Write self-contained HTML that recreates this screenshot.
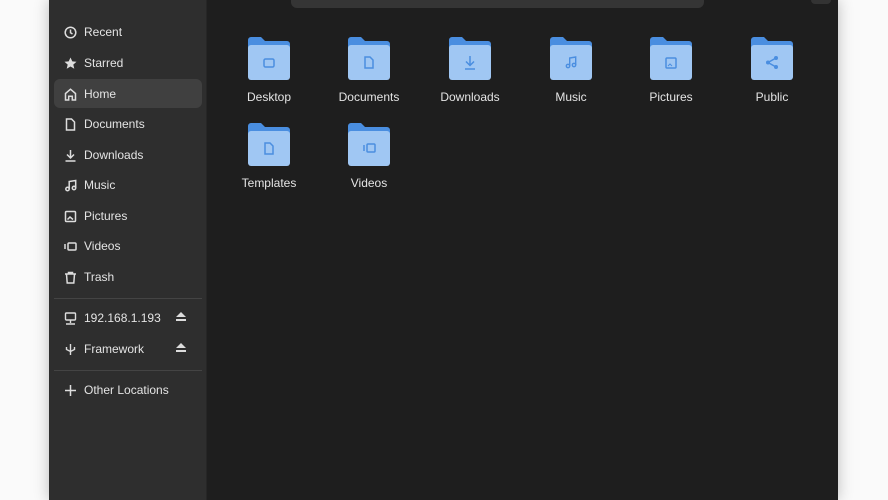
<!DOCTYPE html>
<html><head><style>
body{margin:0;width:888px;height:500px;background:#fafafa;overflow:hidden;font-family:"Liberation Sans",sans-serif;position:relative}
.win{position:absolute;left:49px;top:0;width:789px;height:500px;background:#1e1e1e;box-shadow:0 0 14px rgba(0,0,0,.25)}
.side{position:absolute;left:0;top:0;width:157px;height:500px;background:#2e2e2e;border-right:1px solid #262626}
.it{position:absolute;left:5px;width:148px;height:29px;color:#e4e4e4;font-size:12px;line-height:31px;border-radius:6px}
.it.sel{background:#404040}
.it svg{position:absolute;left:10px;top:9px}
.it span{position:absolute;left:30px}
.sep{position:absolute;left:5px;width:148px;height:1px;background:#444}
.ej{position:absolute;right:16px;top:10px;width:10px;height:9px}
.addr{position:absolute;left:242px;top:0;width:413px;height:8px;background:#353535;border-radius:0 0 6px 6px}
.f{position:absolute;width:100px;text-align:center;color:#e4e4e4;font-size:12px}
.f svg{display:block;margin:0 auto 10px}
</style></head><body>
<div class="win">
<div class="side">
<div class="it" style="top:17px"><svg width="13" height="13" viewBox="0 0 13 13" fill="none" stroke="#ddd" stroke-width="1.5"><circle cx="6.5" cy="6.5" r="5.3"/><path d="M6.5 3.5v3.2l2 1.3"/></svg><span>Recent</span></div>
<div class="it" style="top:48px"><svg width="13" height="13" viewBox="0 0 13 13"><path d="M6.5 .5l1.8 3.9 4.2.4-3.2 2.8 1 4.2-3.8-2.3-3.8 2.3 1-4.2L.5 4.8l4.2-.4z" fill="#ddd"/></svg><span>Starred</span></div>
<div class="it sel" style="top:79px"><svg width="13" height="13" viewBox="0 0 13 13" fill="none" stroke="#ddd" stroke-width="1.5"><path d="M1.5 12V5.5l5-4.3 5 4.3V12H8.3V8.3H4.7V12z"/></svg><span>Home</span></div>
<div class="it" style="top:109px"><svg width="13" height="13" viewBox="0 0 13 13" fill="none" stroke="#ddd" stroke-width="1.5"><path d="M2.5 1h5l3 3v8h-8z"/></svg><span>Documents</span></div>
<div class="it" style="top:140px"><svg width="13" height="13" viewBox="0 0 13 13" fill="none" stroke="#ddd" stroke-width="1.5"><path d="M6.5 1v7.5M3 5.5l3.5 3.5 3.5-3.5M1.5 12h10"/></svg><span>Downloads</span></div>
<div class="it" style="top:170px"><svg width="13" height="13" viewBox="0 0 13 13" fill="none" stroke="#ddd" stroke-width="1.5"><circle cx="3.5" cy="10" r="1.7"/><circle cx="10" cy="9" r="1.7"/><path d="M5.2 10V2.5l6.5-1V9"/></svg><span>Music</span></div>
<div class="it" style="top:201px"><svg width="13" height="13" viewBox="0 0 13 13" fill="none" stroke="#ddd" stroke-width="1.5"><rect x="1.5" y="1.5" width="10" height="10" rx="1"/><path d="M3.5 9.5l2.5-2.5 3 2.5" /></svg><span>Pictures</span></div>
<div class="it" style="top:231px"><svg width="13" height="13" viewBox="0 0 13 13" fill="none" stroke="#ddd" stroke-width="1.5"><rect x="4" y="3" width="8" height="7" rx="1"/><path d="M1 4v5"/></svg><span>Videos</span></div>
<div class="it" style="top:262px"><svg width="13" height="13" viewBox="0 0 13 13" fill="none" stroke="#ddd" stroke-width="1.5"><path d="M1 3h11M4.5 3V1.5h4V3M2.5 3l.7 9h6.6l.7-9"/></svg><span>Trash</span></div>
<div class="sep" style="top:298px"></div>
<div class="it" style="top:303px"><svg width="13" height="13" viewBox="0 0 13 13" fill="none" stroke="#ddd" stroke-width="1.4"><rect x="1.5" y="1" width="10" height="7" rx="1"/><path d="M6.5 8v3M2 12h9"/></svg><span>192.168.1.193</span><svg class="ej" viewBox="0 0 10 9" style="left:auto"><path d="M5 0l5 5H0z M0 7h10v2H0z" fill="#ddd"/></svg></div>
<div class="it" style="top:334px"><svg width="13" height="13" viewBox="0 0 13 13" fill="none" stroke="#ddd" stroke-width="1.4"><path d="M6.5 1v11M2.5 4v2.5l4 2 4-2V4"/></svg><span>Framework</span><svg class="ej" viewBox="0 0 10 9" style="left:auto"><path d="M5 0l5 5H0z M0 7h10v2H0z" fill="#ddd"/></svg></div>
<div class="sep" style="top:370px"></div>
<div class="it" style="top:375px"><svg width="13" height="13" viewBox="0 0 13 13" fill="none" stroke="#ddd" stroke-width="1.5"><path d="M6.5 1v11M1 6.5h11"/></svg><span>Other Locations</span></div>
</div>
<div class="addr"></div>
<div style="position:absolute;left:762px;top:0;width:20px;height:4px;background:#333;border-radius:0 0 10px 10px"></div>
</div>
<svg width="0" height="0" style="position:absolute"><defs><g id="fo"><path d="M0 3a3 3 0 0 1 3-3h10l4 4h22a3 3 0 0 1 3 3v4H0z" fill="#4a8ee0"/><rect x="0" y="8" width="42" height="35" rx="3" fill="#a0c7f3"/></g></defs></svg>
<div class="f" style="left:219px;top:37px"><svg width="42" height="43"><use href="#fo"/><rect x="16" y="22" width="10" height="8" rx="1.5" fill="none" stroke="#4a8ee0" stroke-width="1.5"/></svg>Desktop</div>
<div class="f" style="left:319px;top:37px"><svg width="42" height="43"><use href="#fo"/><path d="M17 20h5l3 3v8h-8z" fill="none" stroke="#4a8ee0" stroke-width="1.5"/></svg>Documents</div>
<div class="f" style="left:420px;top:37px"><svg width="42" height="43"><use href="#fo"/><path d="M21 19v9M17 24.5l4 4 4-4M16 32h10" fill="none" stroke="#4a8ee0" stroke-width="1.5"/></svg>Downloads</div>
<div class="f" style="left:521px;top:37px"><svg width="42" height="43"><use href="#fo"/><circle cx="18" cy="29" r="1.7" fill="none" stroke="#4a8ee0" stroke-width="1.4"/><circle cx="24" cy="28" r="1.7" fill="none" stroke="#4a8ee0" stroke-width="1.4"/><path d="M19.7 29v-8l6-1v8" fill="none" stroke="#4a8ee0" stroke-width="1.4"/></svg>Music</div>
<div class="f" style="left:621px;top:37px"><svg width="42" height="43"><use href="#fo"/><rect x="16" y="21" width="10" height="10" rx="1" fill="none" stroke="#4a8ee0" stroke-width="1.5"/><path d="M18 29l2-2 2 2" stroke="#4a8ee0" fill="none"/></svg>Pictures</div>
<div class="f" style="left:722px;top:37px"><svg width="42" height="43"><use href="#fo"/><circle cx="25" cy="21" r="2" fill="#4a8ee0"/><circle cx="17" cy="25.5" r="2" fill="#4a8ee0"/><circle cx="25" cy="30" r="2" fill="#4a8ee0"/><path d="M25 21l-8 4.5 8 4.5" stroke="#4a8ee0" stroke-width="1.5" fill="none"/></svg>Public</div>
<div class="f" style="left:219px;top:123px"><svg width="42" height="43"><use href="#fo"/><path d="M17 20h5l3 3v8h-8z" fill="none" stroke="#4a8ee0" stroke-width="1.5"/></svg>Templates</div>
<div class="f" style="left:319px;top:123px"><svg width="42" height="43"><use href="#fo"/><rect x="19" y="21" width="8" height="8" rx="1" fill="none" stroke="#4a8ee0" stroke-width="1.5"/><path d="M16 22v6" stroke="#4a8ee0" stroke-width="1.5"/></svg>Videos</div>
</body></html>
